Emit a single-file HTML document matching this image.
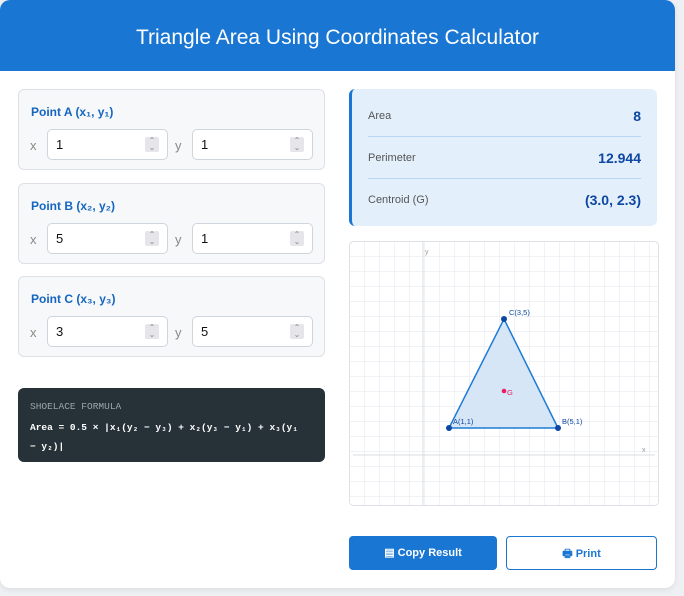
<!DOCTYPE html>
<html><head><style>
*{box-sizing:border-box;margin:0;padding:0}
body{width:684px;height:596px;background:#eef0f4;font-family:"Liberation Sans",sans-serif;position:relative;overflow:hidden}
.card{position:absolute;left:0;top:0;width:675px;height:588px;background:#fff;border-radius:10px;overflow:hidden;box-shadow:0 2px 6px rgba(0,0,0,.08)}
.hdr{position:absolute;left:0;top:0;width:675px;height:71px;background:#1976d2;color:#fff;font-size:21px;text-align:center;line-height:76px}
.pt{position:absolute;left:18px;width:307px;height:81px;background:#f6f8fa;border:1px solid #dde1e6;border-radius:6px}
.pt h3{position:absolute;left:12px;top:15px;font-size:12px;color:#1565c0;font-weight:bold}
.lbl{position:absolute;top:48px;font-size:13px;color:#888}
.inp{position:absolute;top:39px;width:121px;height:31px;background:#fff;border:1px solid #cfd5dc;border-radius:5px;font-size:13px;padding-left:8px;line-height:29px;color:#111}
.spin{position:absolute;right:8px;top:7px;width:14px;height:15px;background:#e6e6ea;border-radius:2px;font-size:8px;color:#888;text-align:center;line-height:7px}
.fm{position:absolute;left:18px;top:388px;width:307px;height:74px;background:#263238;border-radius:6px;font-family:"Liberation Mono",monospace;color:#fff;font-size:9.5px;padding:13px 12px}
.res{position:absolute;left:349px;top:89px;width:308px;height:137px;background:#e3f0fc;border-left:3px solid #1976d2;border-radius:6px}
.row{position:absolute;left:16px;right:16px;height:42px;font-size:11px;color:#555;line-height:42px}
.row b{position:absolute;right:0;color:#0d47a1;font-size:14px}
.btn{position:absolute;top:536px;height:34px;border-radius:4px;font-size:11px;font-weight:bold;text-align:center;line-height:34px}
</style></head><body>
<div class="card">
<div class="hdr">Triangle Area Using Coordinates Calculator</div>

<div class="pt" style="top:89px"><h3>Point A (x₁, y₁)</h3><span class="lbl" style="left:11px">x</span><div class="inp" style="left:28px">1<div class="spin">⌃<br>⌄</div></div><span class="lbl" style="left:156px">y</span><div class="inp" style="left:173px">1<div class="spin">⌃<br>⌄</div></div></div>
<div class="pt" style="top:183px"><h3>Point B (x₂, y₂)</h3><span class="lbl" style="left:11px">x</span><div class="inp" style="left:28px">5<div class="spin">⌃<br>⌄</div></div><span class="lbl" style="left:156px">y</span><div class="inp" style="left:173px">1<div class="spin">⌃<br>⌄</div></div></div>
<div class="pt" style="top:276px"><h3>Point C (x₃, y₃)</h3><span class="lbl" style="left:11px">x</span><div class="inp" style="left:28px">3<div class="spin">⌃<br>⌄</div></div><span class="lbl" style="left:156px">y</span><div class="inp" style="left:173px">5<div class="spin">⌃<br>⌄</div></div></div>

<div class="fm"><div style="color:#9aa5ad;margin-bottom:6px">SHOELACE FORMULA</div><div style="font-weight:bold;line-height:19px;white-space:nowrap">Area = 0.5 × |x₁(y₂ − y₃) + x₂(y₃ − y₁) + x₃(y₁<br>− y₂)|</div></div>

<div class="res">
<div class="row" style="top:6px">Area<b>8</b></div>
<div style="position:absolute;left:16px;right:16px;top:47px;border-top:1px solid #b9d6f2"></div>
<div class="row" style="top:48px">Perimeter<b>12.944</b></div>
<div style="position:absolute;left:16px;right:16px;top:89px;border-top:1px solid #b9d6f2"></div>
<div class="row" style="top:90px">Centroid (G)<b>(3.0, 2.3)</b></div>
</div>

<svg style="position:absolute;left:349px;top:241px" width="310" height="265">
<defs><pattern id="g" width="15" height="15" patternUnits="userSpaceOnUse" x="1" y="1"><path d="M15 0V15M0 15H15" stroke="#e2e6eb" stroke-width="1" fill="none"/></pattern></defs>
<rect x="0.5" y="0.5" width="309" height="264" rx="4" fill="#fff" stroke="#dde1e6"/>
<rect x="1" y="1" width="308" height="263" fill="url(#g)"/>
<line x1="74" y1="1" x2="74" y2="264" stroke="#d8dce2"/>
<line x1="4" y1="214" x2="306" y2="214" stroke="#d8dce2"/>
<text x="76" y="13" font-size="7" fill="#999" font-family="Liberation Sans">y</text>
<text x="293" y="211" font-size="7" fill="#999" font-family="Liberation Sans">x</text>
<polygon points="100,187 209,187 155,78" fill="#d6e6f7" stroke="#1e7bd6" stroke-width="1.5"/>
<circle cx="100" cy="187" r="3" fill="#0d47a1"/><circle cx="209" cy="187" r="3" fill="#0d47a1"/><circle cx="155" cy="78" r="3" fill="#0d47a1"/>
<circle cx="155" cy="150" r="2.3" fill="#e91e63"/>
<g font-size="7.5" font-family="Liberation Sans" fill="#0d47a1"><text x="104" y="183">A(1,1)</text><text x="213" y="183">B(5,1)</text><text x="160" y="74">C(3,5)</text></g>
<text x="158" y="154" font-size="7.5" fill="#e91e63" font-family="Liberation Sans">G</text>
</svg>

<div class="btn" style="left:349px;width:148px;background:#1976d2;color:#fff">▤ Copy Result</div>
<div class="btn" style="left:506px;width:151px;background:#fff;border:1px solid #1976d2;color:#1976d2">🖶 Print</div>
</div>
</body></html>
